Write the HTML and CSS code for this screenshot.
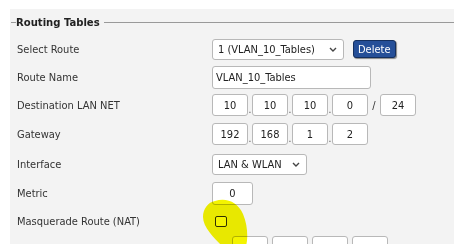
FILE: index.html
```html
<!DOCTYPE html>
<html lang="en">
<head>
    <meta charset="UTF-8">
    <meta name="viewport" content="width=device-width, initial-scale=1.0">
    <title>Routing Tables</title>
    <link rel="stylesheet" href="styles.css">
</head>
<body>
    <div class="panel">
        <div class="legend"><span>Routing Tables</span></div>

        <div class="row">
            <label>Select Route</label>
            <div class="select wide">1 (VLAN_10_Tables)<svg class="chev" viewBox="0 0 8 5"><polyline points="1,1 4,4 7,1"/></svg></div>
            <button class="delete">Delete</button>
        </div>
        <div class="row">
            <label>Route Name</label>
            <div class="input name">VLAN_10_Tables</div>
        </div>
        <div class="row">
            <label>Destination LAN NET</label>
            <div class="ip">
                <div class="input oct">10</div><span class="dot">.</span>
                <div class="input oct">10</div><span class="dot">.</span>
                <div class="input oct">10</div><span class="dot">.</span>
                <div class="input oct">0</div>
                <span class="slash">/</span>
                <div class="input oct">24</div>
            </div>
        </div>
        <div class="row tall">
            <label>Gateway</label>
            <div class="ip">
                <div class="input oct">192</div><span class="dot">.</span>
                <div class="input oct">168</div><span class="dot">.</span>
                <div class="input oct">1</div><span class="dot">.</span>
                <div class="input oct">2</div>
            </div>
        </div>
        <div class="row tall">
            <label>Interface</label>
            <div class="select iface">LAN &amp; WLAN<svg class="chev" viewBox="0 0 8 5"><polyline points="1,1 4,4 7,1"/></svg></div>
        </div>
        <div class="row">
            <label>Metric</label>
            <div class="input metric">0</div>
        </div>
        <div class="row">
            <label>Masquerade Route (NAT)</label>
            <span class="check"></span>
        </div>
        <div class="row next">
            <div class="ip">
                <div class="input oct"></div><span class="dot"></span>
                <div class="input oct"></div><span class="dot"></span>
                <div class="input oct"></div><span class="dot"></span>
                <div class="input oct"></div>
            </div>
        </div>

        <!-- highlighter mark over the NAT checkbox -->
        <svg class="marker" viewBox="0 0 50 50">
            <path d="M14 5 C25 1, 37 6, 42 18 C47 30, 47 43, 45 50 L21 50 C13 42, 2 31, 2 21 C2 13, 7 6, 14 5 Z"/>
        </svg>
    </div>
</body>
</html>
```

FILE: styles.css
```css
body {
    margin: 0;
    background: #fff;
    font-family: "DejaVu Sans Condensed", "DejaVu Sans", sans-serif;
    font-size: 11px;
    color: #333;
    overflow: hidden;
}

.panel {
    position: relative;
    margin: 9px 0 0 10px;
    width: 444px;
    height: 240px;
    background: #f3f3f3;
}

.legend {
    display: flex;
    align-items: center;
    height: 26px;
    padding-left: 1px;
}

.legend::before,
.legend::after {
    content: '';
    height: 1px;
    background: #999;
}

.legend::before {
    width: 5px;
}

.legend::after {
    flex: 1;
    margin-left: 4px;
}

.legend span {
    font-weight: bold;
    font-size: 11.2px;
    color: #222;
}

.row {
    display: flex;
    align-items: center;
    height: 28px;
    padding-left: 7px;
}

.row.tall {
    height: 30px;
}

.row.next {
    align-items: flex-start;
    padding-left: 222px;
    height: 12px;
    margin-top: 1px;
}

.row label {
    width: 195px;
    flex: none;
}

.input,
.select {
    box-sizing: border-box;
    height: 22px;
    border: 1px solid #b8b8b8;
    border-radius: 3px;
    background: #fff;
    color: #222;
    display: flex;
    align-items: center;
}

.select {
    padding: 0 6px 0 5px;
    justify-content: space-between;
    height: 21px;
}

.select.wide {
    width: 132px;
}

.select.iface {
    width: 95px;
}

.chev {
    width: 8px;
    height: 5px;
    fill: none;
    stroke: #444;
    stroke-width: 1.4;
}

.delete {
    margin-left: 9px;
    height: 18px;
    padding: 0 4px;
    border: 1px solid #142f5e;
    border-radius: 3px;
    background: #254f98;
    color: #fff;
    font-family: inherit;
    font-size: 11px;
    box-shadow: 1px 1px 1px #888;
}

.input.name {
    width: 159px;
    height: 23px;
    padding-left: 3px;
}

.ip {
    display: flex;
    align-items: center;
}

.input.oct {
    width: 36px;
    justify-content: center;
}

.dot {
    width: 4px;
    align-self: flex-end;
    line-height: 12px;
    text-align: center;
    font-size: 10px;
    color: #555;
}

.slash {
    width: 12px;
    text-align: center;
    color: #333;
}

.input.metric {
    width: 41px;
    height: 23px;
    justify-content: center;
}

.check {
    box-sizing: border-box;
    width: 12px;
    height: 11px;
    margin-left: 3px;
    border: 1.5px solid #333;
    border-radius: 2px;
    background: #fff;
}

.marker {
    position: absolute;
    left: 191px;
    top: 187px;
    width: 50px;
    height: 50px;
    fill: #f4f400;
    mix-blend-mode: multiply;
}
```
